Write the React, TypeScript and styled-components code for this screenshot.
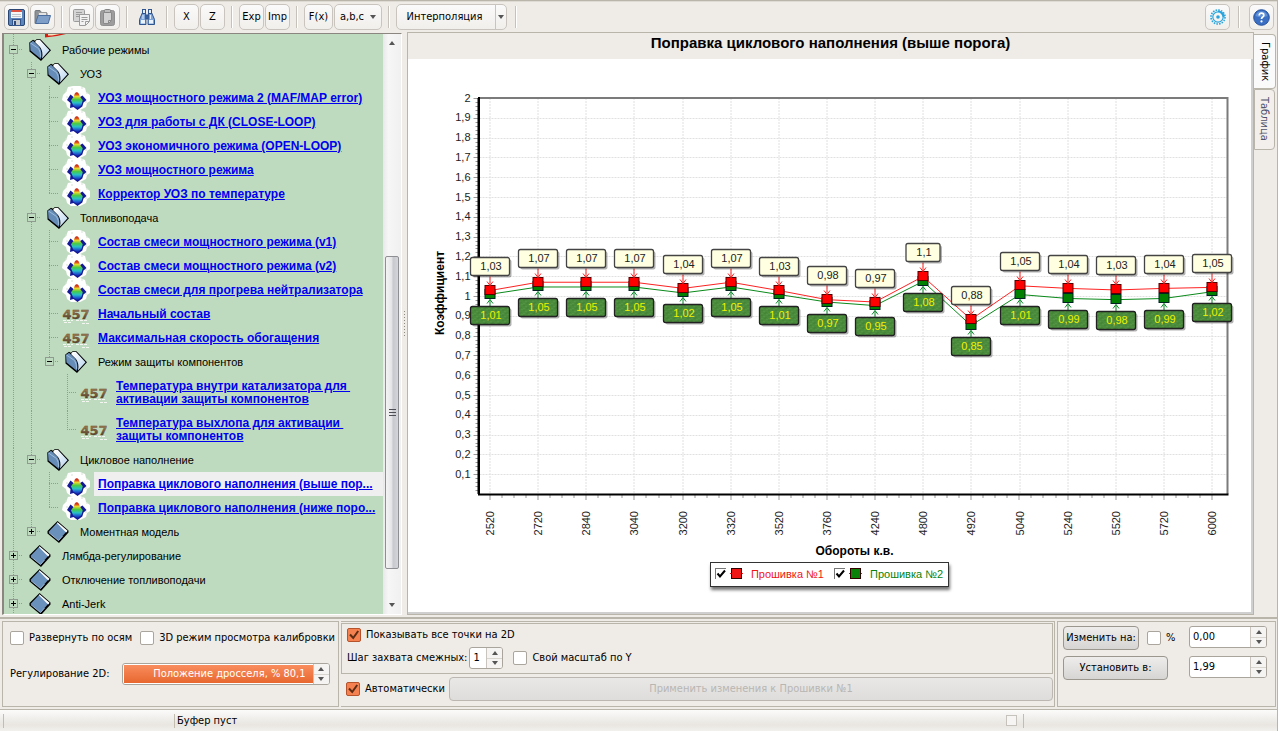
import React from "react";
import styled, { createGlobalStyle, css } from "styled-components";

const Global = createGlobalStyle`
  *, *::before, *::after { box-sizing: border-box; }
  body { margin: 0; background: #efebe7; color: #000; font: 11px/14px "DejaVu Sans Condensed", Tahoma, sans-serif; }
  button, input { font: inherit; color: inherit; }
`;

const plainFont = `"Liberation Sans", Arial, sans-serif`;

/* ---------- frame ---------- */

const Window = styled.div`
  display: flex;
  flex-direction: column;
  height: 100vh;
  min-height: 480px;
  border-top: 1px solid #bab5ab;
  border-right: 1px solid #bab5ab;
`;

const Toolbar = styled.header`
  display: flex;
  align-items: center;
  gap: 1px;
  height: 31px;
  flex: none;
  padding: 0 3px 0 4px;
  border-top: 1px solid #dedad4;
`;

const Separator = styled.span<{ $roomy?: boolean }>`
  width: 1px;
  height: 22px;
  margin: ${(p) => (p.$roomy ? "0 9px 0 7px" : "0 6px 0 5px")};
  background: #c6c1b9;
  box-shadow: 1px 0 #fff;
`;

const Spacer = styled.span`
  flex: 1;
`;

const ToolButton = styled.button<{ $wide?: number; $flat?: boolean }>`
  display: flex;
  align-items: center;
  justify-content: center;
  gap: 6px;
  width: ${(p) => p.$wide ?? 25}px;
  height: 26px;
  flex: none;
  padding: 0;
  white-space: nowrap;
  border: 1px solid #c9c5be;
  border-radius: 5px;
  background: linear-gradient(#fbfafa, #f1efec);
  ${(p) => p.$flat && css`
    border-color: transparent;
    background: none;
  `}
`;

const SplitButton = styled.div`
  display: flex;
  height: 26px;
  border: 1px solid #c9c5be;
  border-radius: 5px;
  background: linear-gradient(#fbfafa, #f1efec);
`;

const SplitMain = styled.button`
  width: 99px;
  padding: 0 3px 0 0;
  border: 0;
  border-right: 1px solid #c9c5be;
  background: none;
`;

const SplitMenu = styled.button`
  display: flex;
  align-items: center;
  justify-content: center;
  width: 10px;
  padding: 0;
  border: 0;
  background: none;
`;

const Main = styled.main`
  display: flex;
  flex: 1;
  min-height: 0;
  padding-left: 2px;
`;

/* ---------- calibration tree ---------- */

const TreePane = styled.nav`
  display: flex;
  width: 400px;
  flex: none;
  margin: 1px 0 2px;
  font-family: ${plainFont};
  border-style: solid;
  border-width: 1px 1px 1px 2px;
  border-color: #8b8780 #fff #fff #8b8780;
`;

const TreeView = styled.div`
  display: flex;
  flex-direction: column;
  flex: 1;
  min-width: 0;
  overflow: hidden;
  background: #bfdbbf;
`;

const ClippedRow = styled.div`
  display: flex;
  height: 4px;
  flex: none;
  overflow: hidden;
`;

const Row = styled.div<{ $tall?: boolean }>`
  display: flex;
  height: ${(p) => (p.$tall ? 37 : 24)}px;
  flex: none;
`;

type GuideKind = "none" | "line" | "tee" | "end";

const dotsDown = "repeating-linear-gradient(to bottom, #8f9f8f 0 1px, transparent 1px 2px)";
const dotsAcross = "repeating-linear-gradient(to right, #8f9f8f 0 1px, transparent 1px 2px)";

const Guide = styled.span<{ $kind: GuideKind; $mid: number }>`
  display: flex;
  width: 18px;
  flex: none;
  padding: ${(p) => p.$mid - 4}px 0 0 5px;
  background-repeat: no-repeat;
  ${(p) => p.$kind === "line" && css`
    background-image: ${dotsDown};
    background-size: 1px 100%;
    background-position: 9px 0;
  `}
  ${(p) => (p.$kind === "tee" || p.$kind === "end") && css`
    background-image: ${dotsDown}, ${dotsAcross};
    background-size: 1px ${p.$kind === "tee" ? "100%" : `${p.$mid}px`}, 9px 1px;
    background-position: 9px 0, 9px ${p.$mid}px;
  `}
`;

const Toggle = styled.button`
  display: flex;
  width: 9px;
  height: 9px;
  padding: 0;
  border: 1px solid #8f9b8f;
  background: #bfdbbf;
`;

const IconSlot = styled.span`
  display: flex;
  align-items: center;
  justify-content: center;
  width: 28px;
  flex: none;
  margin: 0 4px;
`;

const Label = styled.span<{ $selected?: boolean }>`
  display: flex;
  align-items: center;
  flex: 1;
  padding-left: 4px;
  line-height: 13px;
  white-space: pre;
  background: ${(p) => (p.$selected ? "#efefef" : "none")};
`;

const CalLink = styled.a`
  color: #0000f0;
  font-size: 12px;
  font-weight: bold;
  text-decoration: underline;
`;

const ScrollBar = styled.div`
  display: flex;
  flex-direction: column;
  align-items: center;
  width: 18px;
  flex: none;
  padding: 1px 0 2px;
  background: linear-gradient(to right, #e8e8ea, #f6f6f6 30%, #f0f0f0);
`;

const ScrollArrow = styled.button`
  display: flex;
  align-items: center;
  justify-content: center;
  width: 17px;
  height: 15px;
  padding: 0;
  border: 0;
  background: none;
`;

const ScrollTrack = styled.div`
  display: flex;
  flex-direction: column;
  flex: 1;
  width: 14px;
`;

const ScrollGap = styled.span<{ $share: number }>`
  flex: ${(p) => p.$share} 0 0;
`;

const Thumb = styled.span`
  display: flex;
  flex-direction: column;
  align-items: center;
  justify-content: center;
  gap: 2px;
  flex: 312 0 0;
  border: 1px solid #8e8f92;
  border-radius: 2px;
  background: linear-gradient(to right, #f4f4f5, #e6e6e9 45%, #c8c9cf 60%, #d4d5d9);
`;

const GripLine = styled.span`
  width: 7px;
  height: 1px;
  background: #4d4f55;
`;

const Splitter = styled.div`
  display: flex;
  align-items: center;
  justify-content: center;
  width: 5px;
  flex: none;
`;

const SplitterGrip = styled.span`
  width: 1px;
  height: 27px;
  background: repeating-linear-gradient(#8f8a80 0 1px, transparent 1px 3px);
`;

/* ---------- chart ---------- */

const ChartPane = styled.section`
  display: flex;
  flex-direction: column;
  flex: 1;
  min-width: 0;
  margin-bottom: 2px;
  font-family: ${plainFont};
  border: 1px solid #bab5ab;
`;

const ChartTitle = styled.h1`
  height: 26px;
  flex: none;
  margin: 0;
  font-size: 15px;
  line-height: 20px;
  text-align: center;
`;

const ChartBody = styled.div`
  display: flex;
  flex-direction: column;
  align-items: center;
  flex: 1;
  min-height: 0;
  background: #fff;
  border: solid #cfcfcf;
  border-width: 0 2px 2px 0;
`;

const Plot = styled.svg`
  width: 100%;
  flex: 1;
  min-height: 0;
`;

const Legend = styled.div`
  display: flex;
  align-items: center;
  gap: 10px;
  height: 25px;
  flex: none;
  margin-bottom: 25px;
  padding: 0 5px 2px 4px;
  border: 1px solid #333;
  box-shadow: 1px 3px 3px rgba(0, 0, 0, 0.55);
  background: #fff;
`;

const LegendItem = styled.label<{ $color: string }>`
  display: flex;
  align-items: center;
  gap: 4px;
  color: ${(p) => p.$color};
`;

const LegendCheck = styled.input`
  appearance: none;
  width: 11px;
  height: 11px;
  margin: 0;
  border: solid #777;
  border-width: 1px 0 0 1px;
  background: #fff url("data:image/svg+xml,%3Csvg xmlns='http://www.w3.org/2000/svg' viewBox='0 0 10 10'%3E%3Cpath d='M1.5 4.5l2.5 3 5-6' fill='none' stroke='black' stroke-width='2'/%3E%3C/svg%3E") center / 10px 10px no-repeat;
`;

const LegendText = styled.span`
  margin-left: 4px;
`;

/* ---------- side tabs ---------- */

const TabStrip = styled.div`
  display: flex;
  flex-direction: column;
  width: 23px;
  flex: none;
  padding-top: 2px;
`;

const Tab = styled.button<{ $active?: boolean }>`
  width: ${(p) => (p.$active ? 22 : 21)}px;
  height: ${(p) => (p.$active ? 55 : 61)}px;
  padding: 7px 0 0;
  writing-mode: vertical-rl;
  text-align: left;
  line-height: 20px;
  color: ${(p) => (p.$active ? "#000" : "#50506a")};
  border: 1px solid #bab5ab;
  border-left-width: ${(p) => (p.$active ? 0 : 1)}px;
  border-radius: 0 4px 4px 0;
  background: ${(p) => (p.$active ? "#fbfafa" : "#f2efec")};
`;

/* ---------- bottom panels ---------- */

const Controls = styled.section`
  display: flex;
  gap: 2px;
  height: 93px;
  flex: none;
  padding: 2px 1px 2px 2px;
  border: solid #bab5ab;
  border-width: 2px 0 1px;
`;

const ViewGroup = styled.div`
  display: flex;
  flex-direction: column;
  gap: 18px;
  width: 337px;
  flex: none;
  padding: 9px 0 0 7px;
  border: 1px solid #bab5ab;
`;

const EditGroup = styled.div`
  display: grid;
  grid-template-columns: 1fr auto;
  grid-auto-rows: 24px;
  gap: 6px;
  width: 219px;
  flex: none;
  padding: 4px 8px 0 5px;
  border: 1px solid #bab5ab;
`;

const MiddleGroup = styled.div`
  display: flex;
  flex-direction: column;
  flex: 1;
  min-width: 0;
  border: 1px solid #bab5ab;
  border-left-width: 0;
`;

const InnerGroup = styled.div`
  display: flex;
  flex-direction: column;
  gap: 5px;
  height: 51px;
  margin: 1px 1px 0 0;
  padding: 4px 5px;
  border: 1px solid #bab5ab;
`;

const ApplyLine = styled.div`
  display: flex;
  align-items: center;
  gap: 4px;
  padding: 3px 1px 0 5px;
`;

const Line = styled.div<{ $gap?: number }>`
  display: flex;
  align-items: center;
  gap: ${(p) => p.$gap ?? 5}px;
`;

const Field = styled.label`
  display: flex;
  align-items: center;
  gap: 5px;
  white-space: nowrap;
`;

const CheckBox = styled.input`
  appearance: none;
  width: 14px;
  height: 14px;
  flex: none;
  margin: 0;
  border: 1px solid #aaa59d;
  border-radius: 2px;
  background: #fff;
  &:checked {
    border-color: #b5532c;
    background: #f4814f url("data:image/svg+xml,%3Csvg xmlns='http://www.w3.org/2000/svg' viewBox='0 0 12 12'%3E%3Cpath d='M2 5.5l3.2 3.5 5-7' fill='none' stroke='%235c2d14' stroke-width='2'/%3E%3C/svg%3E") center / 12px 12px no-repeat;
  }
`;

const Spin = styled.span<{ $width: number }>`
  display: flex;
  width: ${(p) => p.$width}px;
  height: 22px;
  flex: none;
  overflow: hidden;
  border: 1px solid #a9a49c;
  border-radius: 3px;
  background: #fff;
`;

const SpinInput = styled.input<{ $accent?: boolean }>`
  flex: 1;
  min-width: 0;
  padding: 0 3px;
  border: 0;
  background: none;
  ${(p) => p.$accent && css`
    margin: 1px 0 1px 1px;
    padding-right: 7px;
    color: #fff;
    text-align: right;
    background: linear-gradient(#f98d5e, #e8672f);
  `}
`;

const SpinButtons = styled.span`
  display: flex;
  flex-direction: column;
  width: 16px;
  border-left: 1px solid #c9c5be;
  background: #f6f4f2;
`;

const SpinButton = styled.button<{ $joined?: boolean }>`
  display: flex;
  align-items: center;
  justify-content: center;
  flex: 1;
  padding: 0;
  border: 0;
  background: none;
  & + & { border-top: ${(p) => (p.$joined ? 0 : 1)}px solid #d8d4ce; }
`;

const PushButton = styled.button<{ $width?: number }>`
  ${(p) => (p.$width ? css`width: ${p.$width}px;` : css`flex: 1;`)}
  height: 24px;
  padding: 0;
  white-space: nowrap;
  border: 1px solid #9b968e;
  border-radius: 4px;
  background: linear-gradient(#eeedec, #d6d5d3);
  &:disabled {
    color: #b9b6b2;
    border-color: #bcb8b1;
    background: linear-gradient(#e9e8e7, #dedddc);
  }
`;

/* ---------- status bar ---------- */

const StatusBar = styled.footer`
  display: flex;
  align-items: center;
  gap: 2px;
  height: 21px;
  flex: none;
  padding: 0 3px 0 3px;
  background: linear-gradient(#fbfbfa, #e9e6e1 70%, #f2f0ed);
`;

const StatusDivider = styled.span`
  width: 1px;
  height: 14px;
  background: #c2bdae;
`;

const StatusLead = styled.span`
  width: 166px;
`;

const StatusSlot = styled.span`
  width: 11px;
  height: 11px;
  margin-right: 4px;
  border: 1px solid #c6c3bd;
  background: #f6f5f3;
`;

const StatusEnd = styled.span`
  flex: 0 1 248px;
`;

/* ---------- drawings ---------- */

const Caret = ({ up }: { up?: boolean }) => (
  <svg width="6" height="4" viewBox="0 0 6 4" aria-hidden="true">
    <path d={up ? "M0 4l3-4 3 4z" : "M0 0l3 4 3-4z"} fill="#555" />
  </svg>
);

const SaveIcon = () => (
  <svg width="17" height="17" viewBox="0 0 17 17">
    <rect x=".5" y=".5" width="16" height="16" rx="1.5" fill="#5d86bd" stroke="#2b4672" />
    <rect x="3" y="1" width="11" height="8" fill="#f5f5f5" />
    <rect x="3" y="1" width="11" height="2" fill="#dd5240" />
    <path d="M4 5.500h9M4 7.500h9" stroke="#bfc5cc" />
    <rect x="4.500" y="10.500" width="8" height="6" fill="#c9ccd1" stroke="#33558c" />
    <rect x="6" y="12" width="2" height="4" fill="#2f4a78" />
  </svg>
);

const OpenIcon = () => (
  <svg width="17" height="16" viewBox="0 0 17 16">
    <path d="M1 14.500V2.500q0-1 1-1h4l1.500 2H12q1 0 1 1V7" fill="#8e9296" stroke="#75797d" />
    <path d="M4.500 3.500h8v3h-8z" fill="#e4e4e4" stroke="#9a9a9a" />
    <path d="M1.500 14.500L4 6.500h12.500l-2.300 8z" fill="#7f9fc8" stroke="#4a6c9c" />
  </svg>
);

const CopyIcon = () => (
  <svg width="17" height="17" viewBox="0 0 17 17" stroke="#9b9b9b">
    <rect x=".5" y=".5" width="11" height="12" rx="1" fill="#d4d4d4" />
    <path d="M3 3.500h6M3 5.500h6M3 7.500h3" />
    <path d="M6.500 5.500h10v7l-4 4h-6z" fill="#f2f2f2" />
    <path d="M12.500 16v-3.500h3.500M8.500 8.500h6M8.500 10.500h6M8.500 12.500h2" fill="none" />
  </svg>
);

const PasteIcon = () => (
  <svg width="15" height="17" viewBox="0 0 15 17">
    <rect x=".5" y="1.500" width="14" height="15" rx="2" fill="#9d9d9d" stroke="#8f8f8f" />
    <path d="M3.500 3.500h8v8l-3 3h-5z" fill="#d2d2d2" stroke="#8a8a8a" />
    <path d="M8.500 14.500v-3h3" fill="none" stroke="#8a8a8a" />
    <rect x="4.500" y=".5" width="6" height="3" rx="1" fill="#bdbdbd" stroke="#858585" />
  </svg>
);

const FindIcon = () => (
  <svg width="18" height="18" viewBox="0 0 18 18" stroke="#2f5590">
    <path d="M4.500 4.500h3l.5 12H1.500v-5z" fill="#7fa5d8" />
    <path d="M13.500 4.500h-3l-.5 12h6.500v-5z" fill="#7fa5d8" />
    <rect x="4.500" y="1.500" width="3" height="4" fill="#e6eefa" />
    <rect x="10.500" y="1.500" width="3" height="4" fill="#e6eefa" />
    <path d="M8 7h2v4H8z" fill="#3f6cad" />
    <path d="M3 12h4v3.500H3zM11 12h4v3.500h-4z" fill="#eaf2fb" stroke="none" />
    <path d="M5 7v4M12.500 7v4" stroke="#e0ebf8" />
  </svg>
);

const GearIcon = () => (
  <svg width="16" height="16" viewBox="0 0 16 16" fill="none" stroke="#27a3dd">
    <circle cx="8" cy="8" r="7" strokeWidth="1.600" strokeDasharray="1.600 1.150" />
    <path d="M8 2.800a5.200 5.200 0 1 0 5.200 5.200" strokeWidth="1.200" />
    <path d="M8 2.500a5.500 5.500 0 0 1 5.500 5.500" strokeWidth="2.200" />
    <circle cx="8" cy="8" r="1.800" fill="#27a3dd" stroke="none" />
  </svg>
);

const HelpIcon = () => (
  <svg width="17" height="17" viewBox="0 0 17 17">
    <circle cx="8.500" cy="8.500" r="7.800" fill="#3a6fc4" stroke="#234f9c" />
    <path d="M2.500 7a6.200 6.200 0 0 1 12 0q-6 2.500-12 0z" fill="#7aa6e6" opacity=".6" />
    <path d="M6.200 6.500q0-2.300 2.300-2.300t2.300 2q0 1.300-1.300 2-1 .6-1 1.800" fill="none" stroke="#fff" strokeWidth="1.700" />
    <circle cx="8.500" cy="12.400" r="1.100" fill="#fff" />
  </svg>
);

const FolderOpen = () => (
  <svg width="24" height="24" viewBox="0 0 24 24">
    <defs>
      <linearGradient id="page" x1="0" y1="0" x2="1" y2="1">
        <stop offset=".1" stopColor="#fff" />
        <stop offset="1" stopColor="#b4d2ee" />
      </linearGradient>
    </defs>
    <path d="M1.300 4.500L5 1.800l2 1L8.500 1.300h4L23 12.300 13 23 1.500 13.500z" fill="#000" />
    <path d="M8.500 2h3.500l9.500 10.300L14 20.500q1.500-7-2-11.500L7 4z" fill="url(#page)" />
    <path d="M2 5l3-2.200L11 8.500q3.500 4.500 2 12.500L2.500 12.500z" fill="#668db8" />
    <path d="M2.500 5L10.500 10.500q2.200 3 2.200 8.500" fill="none" stroke="#9cbcdc" />
  </svg>
);

const FolderClosed = () => (
  <svg width="24" height="24" viewBox="0 0 24 24">
    <path d="M11.500 1L22.500 10.500 22.500 12.500 13 23 1.500 13.500v-2.500z" fill="#000" />
    <path d="M11.500 2.500l9.500 8.500-8.500 9.500L2.500 12z" fill="#6a91bc" />
    <path d="M11.500 2.200l10 8.600-1.200 1.700L18.700 11 11 3.300z" fill="#fff" />
    <path d="M3 12.700l9.500 7.800 4-4.500" fill="none" stroke="#9fbcdc" />
  </svg>
);

const SurfaceIcon = () => (
  <svg width="28" height="24" viewBox="0 0 28 24">
    <defs>
      <linearGradient id="surf" x1="0" y1="0" x2="0" y2="1">
        <stop offset="0" stopColor="#c01808" />
        <stop offset=".14" stopColor="#e0501c" />
        <stop offset=".26" stopColor="#e8d82c" />
        <stop offset=".45" stopColor="#48cc48" />
        <stop offset=".65" stopColor="#28c0c8" />
        <stop offset=".85" stopColor="#1c50d0" />
        <stop offset="1" stopColor="#12158c" />
      </linearGradient>
    </defs>
    <path d="M6 1l5-1h7l5 2 1 4 4 3v6l-3 2-1 4-6 3H9l-4-3-1-4-4-3 1-5 3-3z" fill="#fff" />
    <path d="M9 3h2M19 2h2M4 11h2M23 16h2M3 5h2M24 7h2" stroke="#d3e3d3" />
    <path d="M5 14l3.500-5.500 3 2.500h6.500l2.500-1.500 4 4.500-3 2.500-1.200 4L15.500 24l-4-3L8 22l.5-5z" fill="#141a96" />
    <path d="M12.800 7.500q2-2.500 3.900 0l1.500 3.500 2.500 3.200-1.200 4.800-4 3.500-4.300-3L9 14.200l2.500-3.200z" fill="url(#surf)" />
  </svg>
);

const NumberIcon = () => (
  <svg width="28" height="24" viewBox="0 0 28 24">
    <defs>
      <linearGradient id="bronze" x1="0" y1="0" x2="0" y2="1">
        <stop offset=".2" stopColor="#a08258" />
        <stop offset=".9" stopColor="#4a3623" />
      </linearGradient>
    </defs>
    <path d="M1 18.500h10M14 18.500h12M2 20.500h8M20 21.500h7" stroke="#f4f6f2" strokeDasharray="3 1" />
    <text x="14" y="17" textAnchor="middle" fontFamily="DejaVu Sans" fontWeight="bold" fontSize="13" fill="url(#bronze)" stroke="#5c4326" strokeWidth=".3">457</text>
  </svg>
);

/* ---------- tree data ---------- */

type Kind = "open" | "closed" | "surface" | "number";
interface Node {
  text: string;
  kind: Kind;
  guides: GuideKind[];
  selected?: boolean;
}

const nested: GuideKind[] = ["line", "line"];

const nodes: Node[] = [
  { text: "Рабочие режимы", kind: "open", guides: ["tee"] },
  { text: "УОЗ", kind: "open", guides: ["line", "tee"] },
  { text: "УОЗ мощностного режима 2 (MAF/MAP error)", kind: "surface", guides: [...nested, "tee"] },
  { text: "УОЗ для работы с ДК (CLOSE-LOOP)", kind: "surface", guides: [...nested, "tee"] },
  { text: "УОЗ экономичного режима (OPEN-LOOP)", kind: "surface", guides: [...nested, "tee"] },
  { text: "УОЗ мощностного режима", kind: "surface", guides: [...nested, "tee"] },
  { text: "Корректор УОЗ по температуре", kind: "surface", guides: [...nested, "end"] },
  { text: "Топливоподача", kind: "open", guides: ["line", "tee"] },
  { text: "Состав смеси мощностного режима (v1)", kind: "surface", guides: [...nested, "tee"] },
  { text: "Состав смеси мощностного режима (v2)", kind: "surface", guides: [...nested, "tee"] },
  { text: "Состав смеси для прогрева нейтрализатора", kind: "surface", guides: [...nested, "tee"] },
  { text: "Начальный состав", kind: "number", guides: [...nested, "tee"] },
  { text: "Максимальная скорость обогащения", kind: "number", guides: [...nested, "tee"] },
  { text: "Режим защиты компонентов", kind: "open", guides: [...nested, "end"] },
  { text: "Температура внутри катализатора для \nактивации защиты компонентов", kind: "number", guides: [...nested, "none", "tee"] },
  { text: "Температура выхлопа для активации \nзащиты компонентов", kind: "number", guides: [...nested, "none", "end"] },
  { text: "Цикловое наполнение", kind: "open", guides: ["line", "tee"] },
  { text: "Поправка циклового наполнения (выше пор...", kind: "surface", guides: [...nested, "tee"], selected: true },
  { text: "Поправка циклового наполнения (ниже поро...", kind: "surface", guides: [...nested, "end"] },
  { text: "Моментная модель", kind: "closed", guides: ["line", "end"] },
  { text: "Лямбда-регулирование", kind: "closed", guides: ["tee"] },
  { text: "Отключение топливоподачи", kind: "closed", guides: ["tee"] },
  { text: "Anti-Jerk", kind: "closed", guides: ["tee"] },
];

const icons: Record<Kind, React.FC> = {
  open: FolderOpen,
  closed: FolderClosed,
  surface: SurfaceIcon,
  number: NumberIcon,
};

function TreeRow({ node }: { node: Node }) {
  const tall = node.text.includes("\n");
  const mid = tall ? 18 : 11;
  const branch = node.kind === "open" || node.kind === "closed";
  const Icon = icons[node.kind];
  return (
    <Row $tall={tall}>
      {node.guides.map((kind, i) => (
        <Guide key={i} $kind={kind} $mid={mid}>
          {branch && i === node.guides.length - 1 && (
            <Toggle aria-label={node.kind === "open" ? "Свернуть" : "Развернуть"}>
              <svg width="7" height="7" viewBox="0 0 7 7" shapeRendering="crispEdges">
                <path d={node.kind === "open" ? "M1 3.500h5" : "M1 3.500h5M3.500 1v5"} stroke="#000" />
              </svg>
            </Toggle>
          )}
        </Guide>
      ))}
      <IconSlot><Icon /></IconSlot>
      <Label $selected={node.selected}>
        {branch ? node.text : <CalLink href="#">{node.text}</CalLink>}
      </Label>
    </Row>
  );
}

/* ---------- chart data ---------- */

const rpm = [2520, 2720, 2840, 3040, 3200, 3320, 3520, 3760, 4240, 4800, 4920, 5040, 5240, 5520, 5720, 6000];
const fw1 = [1.03, 1.072, 1.072, 1.072, 1.041, 1.072, 1.03, 0.984, 0.972, 1.101, 0.884, 1.054, 1.041, 1.033, 1.041, 1.046];
const fw2 = [1.011, 1.048, 1.048, 1.048, 1.018, 1.048, 1.01, 0.972, 0.954, 1.076, 0.854, 1.01, 0.99, 0.984, 0.99, 1.024];

const LEFT = 71;
const RIGHT = 819;
const TOP = 39;
const BOTTOM = 435;
const px = (i: number) => Math.floor(81.600 + i * 48.130) + 0.5;
const py = (v: number) => BOTTOM + 0.500 - v * 198;
const comma = (v: number) => String(Number(v.toFixed(2))).replace(".", ",");
const ticks = Array.from({ length: 19 }, (_, i) => (i + 1) / 10);

function Mark({ i, v, green }: { i: number; v: number; green?: boolean }) {
  const label = comma(v);
  const w = label.length < 4 ? 34 : 39;
  const x = px(i);
  const y = Math.floor(py(v)) + 0.5;
  const top = green ? y + 12 : y - 33;
  const color = green ? "#0a8a2a" : "#f22";
  return (
    <g>
      <path
        d={green ? `M${x} ${y + 12}v-7m-3 4l3-4 3 4` : `M${x} ${y - 14}v9m-3-4l3 4 3-4`}
        fill="none"
        stroke={color}
      />
      <rect x={x - w / 2 + 2} y={top + 2} width={w} height="18" rx="2" fill="#000" opacity=".3" />
      <rect x={x - w / 2} y={top} width={w} height="18" rx="2" fill={green ? "url(#grass)" : "#ffffe1"} stroke={green ? "#222" : "#444"} strokeWidth="1.300" />
      <text x={x + 1} y={top + 12} textAnchor="middle" fill={green ? "#f0f000" : "#222"}>{label}</text>
    </g>
  );
}

function Chart() {
  const line = (data: number[]) => data.map((v, i) => `${px(i)},${py(v)}`).join(" ");
  return (
    <Plot viewBox="0 0 842 503" fontFamily="Liberation Sans, Arial, sans-serif" fontSize="11">
      <defs>
        <pattern id="grass" width="7" height="5" patternUnits="userSpaceOnUse">
          <rect width="7" height="5" fill="#4a8c3c" />
          <path d="M1 .5h1M5 2.500h1M3 4.500h1" stroke="#5c9c4c" />
          <path d="M3 1.500h1M0 3.500h1M6 4.500h1" stroke="#3d7d31" />
        </pattern>
      </defs>
      <g stroke="#e0e0e0" strokeDasharray="2 1">
        {ticks.map((v) => <path key={v} d={`M${LEFT} ${Math.floor(py(v)) + 0.500}H${RIGHT}`} />)}
        {rpm.map((r, i) => <path key={r} d={`M${px(i)} ${TOP}V${BOTTOM}`} />)}
      </g>
      <path d={`M${LEFT} ${TOP}H${RIGHT}V${BOTTOM}`} fill="none" stroke="#7b7b7b" strokeWidth="2" />
      <g stroke="#999">
        {Array.from({ length: 100 }, (_, k) => (
          <path key={k} d={`M${(k + 1) % 5 ? 67 : 65} ${Math.floor(py((k + 1) / 50)) + 0.500}H70`} />
        ))}
        {Array.from({ length: 61 }, (_, k) => (
          <path key={k} d={`M${Math.floor(81.600 + k * 12.030) + 0.500} 436v${k % 4 ? 3 : 5}`} />
        ))}
      </g>
      <path d={`M${LEFT - 0.500} ${TOP - 1}V${BOTTOM + 0.500}H${RIGHT + 1}`} fill="none" stroke="#000" strokeWidth="2" />
      <path d={`M${LEFT - 1} ${TOP}V${BOTTOM}`} stroke="#000" strokeWidth="2" />
      <g fill="#222" textAnchor="end">
        {[...ticks, 2].map((v) => <text key={v} x="62" y={Math.round(py(v)) + 3}>{comma(v)}</text>)}
      </g>
      <g fill="#222" textAnchor="end">
        {rpm.map((r, i) => <text key={r} transform={`translate(${px(i) + 3.500} 452) rotate(-90)`}>{r}</text>)}
      </g>
      <g fontSize="12" fontWeight="bold" textAnchor="middle">
        <text x="446" y="496">Обороты к.в.</text>
        <text transform="translate(35 234) rotate(-90)">Коэффициент</text>
      </g>
      <polyline points={line(fw2)} fill="none" stroke="#0a8a1a" />
      {fw2.map((v, i) => <rect key={i} x={px(i) - 5} y={Math.floor(py(v)) - 4.500} width="10" height="9" fill="#008000" stroke="#022" />)}
      <polyline points={line(fw1)} fill="none" stroke="#f22" />
      {fw1.map((v, i) => <rect key={i} x={px(i) - 5} y={Math.floor(py(v)) - 4.500} width="10" height="9" fill="#f00" stroke="#500" />)}
      {fw2.map((v, i) => <Mark key={i} i={i} v={v} green />)}
      {fw1.map((v, i) => <Mark key={i} i={i} v={v} />)}
    </Plot>
  );
}

function LegendEntry({ name, color }: { name: string; color: string }) {
  return (
    <LegendItem $color={color}>
      <LegendCheck type="checkbox" defaultChecked />
      <svg width="13" height="11" viewBox="0 0 13 11">
        <path d="M0 5.500h13" stroke={color} />
        <rect x="1.500" y=".5" width="10" height="10" fill={color} stroke="#300" />
      </svg>
      <LegendText>{name}</LegendText>
    </LegendItem>
  );
}

function SpinBox({ label, value, width, accent }: { label: string; value: string; width: number; accent?: boolean }) {
  return (
    <Spin $width={width}>
      <SpinInput aria-label={label} defaultValue={value} $accent={accent} />
      <SpinButtons>
        <SpinButton aria-label="Больше" $joined={accent}><Caret up /></SpinButton>
        <SpinButton aria-label="Меньше" $joined={accent}><Caret /></SpinButton>
      </SpinButtons>
    </Spin>
  );
}

export default function App() {
  return (
    <Window>
      <Global />
      <Toolbar>
        <ToolButton aria-label="Сохранить"><SaveIcon /></ToolButton>
        <ToolButton aria-label="Открыть"><OpenIcon /></ToolButton>
        <Separator />
        <ToolButton aria-label="Копировать"><CopyIcon /></ToolButton>
        <ToolButton aria-label="Вставить"><PasteIcon /></ToolButton>
        <Separator />
        <ToolButton aria-label="Найти" $flat $wide={26}><FindIcon /></ToolButton>
        <Separator />
        <ToolButton>X</ToolButton>
        <ToolButton>Z</ToolButton>
        <Separator />
        <ToolButton>Exp</ToolButton>
        <ToolButton>Imp</ToolButton>
        <Separator />
        <ToolButton $wide={29}>F(x)</ToolButton>
        <ToolButton $wide={48}>a,b,c <Caret /></ToolButton>
        <Separator />
        <SplitButton>
          <SplitMain>Интерполяция</SplitMain>
          <SplitMenu aria-label="Выбрать действие"><Caret /></SplitMenu>
        </SplitButton>
        <Separator $roomy />
        <Spacer />
        <ToolButton aria-label="Настройки"><GearIcon /></ToolButton>
        <Separator $roomy />
        <ToolButton aria-label="Справка"><HelpIcon /></ToolButton>
      </Toolbar>

      <Main>
        <TreePane>
          <TreeView>
            <ClippedRow>
              <Guide $kind="line" $mid={11} />
              <svg width="60" height="4" viewBox="0 0 60 4">
                <path d="M23 0h21l-9 2-12 1.500z" fill="#d81a10" />
                <path d="M26 0h12l-8 1.500h-4z" fill="#f4e6c0" />
              </svg>
            </ClippedRow>
            {nodes.map((n) => <TreeRow key={n.text} node={n} />)}
          </TreeView>
          <ScrollBar>
            <ScrollArrow aria-label="Вверх"><Caret up /></ScrollArrow>
            <ScrollTrack>
              <ScrollGap $share={207} />
              <Thumb><GripLine /><GripLine /><GripLine /></Thumb>
              <ScrollGap $share={28} />
            </ScrollTrack>
            <ScrollArrow aria-label="Вниз"><Caret /></ScrollArrow>
          </ScrollBar>
        </TreePane>
        <Splitter><SplitterGrip /></Splitter>
        <ChartPane>
          <ChartTitle>Поправка циклового наполнения (выше порога)</ChartTitle>
          <ChartBody>
            <Chart />
            <Legend>
              <LegendEntry name="Прошивка №1" color="#f01414" />
              <LegendEntry name="Прошивка №2" color="#0a820a" />
            </Legend>
          </ChartBody>
        </ChartPane>
        <TabStrip>
          <Tab $active>График</Tab>
          <Tab>Таблица</Tab>
        </TabStrip>
      </Main>

      <Controls>
        <ViewGroup>
          <Line $gap={8}>
            <Field><CheckBox type="checkbox" />Развернуть по осям</Field>
            <Field><CheckBox type="checkbox" />3D режим просмотра калибровки</Field>
          </Line>
          <Line $gap={12}>
            <span>Регулирование 2D:</span>
            <SpinBox label="Регулирование 2D" value="Положение дросселя, % 80,1" width={208} accent />
          </Line>
        </ViewGroup>
        <MiddleGroup>
          <InnerGroup>
            <Field><CheckBox type="checkbox" defaultChecked />Показывать все точки на 2D</Field>
            <Line $gap={10}>
              <Line $gap={2}>
                <span>Шаг захвата смежных:</span>
                <SpinBox label="Шаг захвата смежных" value="1" width={34} />
              </Line>
              <Field><CheckBox type="checkbox" />Свой масштаб по Y</Field>
            </Line>
          </InnerGroup>
          <ApplyLine>
            <Field><CheckBox type="checkbox" defaultChecked />Автоматически</Field>
            <PushButton disabled>Применить изменения к Прошивки №1</PushButton>
          </ApplyLine>
        </MiddleGroup>
        <EditGroup>
          <Line $gap={8}>
            <PushButton $width={76}>Изменить на:</PushButton>
            <Field><CheckBox type="checkbox" />%</Field>
          </Line>
          <SpinBox label="Изменить на" value="0,00" width={78} />
          <Line>
            <PushButton $width={105}>Установить в:</PushButton>
          </Line>
          <SpinBox label="Установить в" value="1,99" width={78} />
        </EditGroup>
      </Controls>

      <StatusBar>
        <StatusDivider />
        <StatusLead />
        <StatusDivider />
        <span>Буфер пуст</span>
        <Spacer />
        <StatusSlot />
        <StatusDivider />
        <StatusEnd />
      </StatusBar>
    </Window>
  );
}
